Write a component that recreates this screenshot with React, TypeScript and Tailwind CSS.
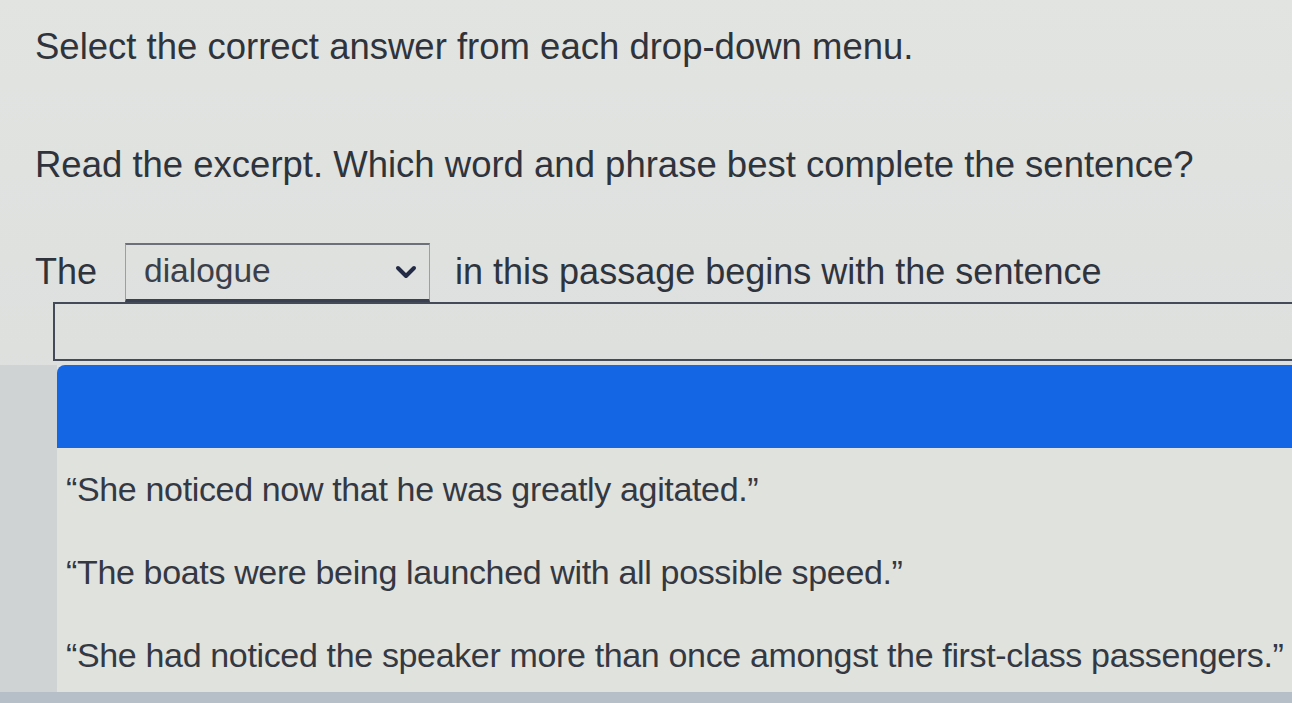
import { useState } from "react";

const options = [
  "",
  "\u201CShe noticed now that he was greatly agitated.\u201D",
  "\u201CThe boats were being launched with all possible speed.\u201D",
  "\u201CShe had noticed the speaker more than once amongst the first-class passengers.\u201D",
];

function Chevron() {
  return (
    <svg width="22" height="14" viewBox="0 0 22 14" className="shrink-0">
      <path d="M3 3 L11 11 L19 3" fill="none" stroke="#222a45" strokeWidth="4" strokeLinecap="round" strokeLinejoin="round" />
    </svg>
  );
}

export default function App() {
  const [active] = useState(0);

  return (
    <div className="h-[703px] w-full overflow-hidden bg-linear-to-b from-[#e1e4e1] to-[#d9dcda] font-['Liberation_Sans',Arial,sans-serif] text-[#2f333c]">
      <p className="pl-[35px] pt-[25px] text-[36.5px] leading-[44px]">Select the correct answer from each drop-down menu.</p>

      <p className="mt-[74px] pl-[35px] text-[36.5px] leading-[44px]">
        Read the excerpt. Which word and phrase best complete the sentence?
      </p>

      {/* sentence with the first (closed) select */}
      <div className="mt-[56px] flex h-[59px] items-center pl-[35px] text-[36px] leading-[44px]">
        <span className="pb-[2px]">The</span>
        <div className="ml-[28px] flex h-[59px] w-[305px] items-center justify-between border-x border-t-2 border-b-[3px] border-x-[#9a9ea5] border-t-[#6c7079] border-b-[#3b4051] pl-[18px] pr-[12px]">
          <span className="pb-[2px] text-[33.5px] text-[#3a3f4a]">dialogue</span>
          <Chevron />
        </div>
        <span className="ml-[25px] pb-[2px]">in this passage begins with the sentence</span>
      </div>

      {/* second select, opened */}
      <div className="ml-[53px] h-[59px] border-y-2 border-l-2 border-[#454a59]" />

      <div className="mt-[4px] bg-[#cfd3d3] pl-[57px]">
        <ul className="h-[327px] overflow-hidden bg-[#e0e2de]">
          {options.map((text, i) => (
            <li
              key={i}
              className={
                i === active
                  ? "h-[83px] rounded-tl-[8px] bg-[#1566e5]"
                  : "h-[83px] whitespace-nowrap pl-[9px] text-[34px] leading-[83px] tracking-[-0.35px] text-[#343842]"
              }
            >
              {text}
            </li>
          ))}
        </ul>
      </div>
      <div className="h-[20px] bg-[#b6bec8]" />
    </div>
  );
}
